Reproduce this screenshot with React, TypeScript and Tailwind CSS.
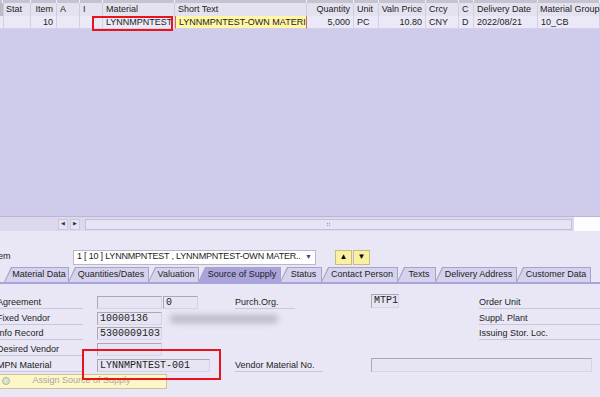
import React from "react";

const cols = "grid-cols-[3px_28px_26px_23px_23px_72px_132px_47px_25px_47px_33px_15px_64px_62px]";

const headers: { label: string; right?: boolean }[] = [
  { label: "" },
  { label: "Stat" },
  { label: "Item", right: true },
  { label: "A" },
  { label: "I" },
  { label: "Material" },
  { label: "Short Text" },
  { label: "Quantity", right: true },
  { label: "Unit" },
  { label: "Valn Price", right: true },
  { label: "Crcy" },
  { label: "C" },
  { label: "Delivery Date" },
  { label: "Material Group" },
];

const row: { v: string; right?: boolean; yellow?: boolean }[] = [
  { v: "" },
  { v: "" },
  { v: "10", right: true },
  { v: "" },
  { v: "" },
  { v: "LYNNMPNTEST" },
  { v: "LYNNMPNTEST-OWN MATERI", yellow: true },
  { v: "5,000", right: true },
  { v: "PC" },
  { v: "10.80", right: true },
  { v: "CNY" },
  { v: "D" },
  { v: "2022/08/21" },
  { v: "10_CB" },
];

const tabs = [
  { label: "Material Data", w: "w-[65px]" },
  { label: "Quantities/Dates", w: "w-[81px]" },
  { label: "Valuation", w: "w-[51px]" },
  { label: "Source of Supply", w: "w-[83px]", active: true },
  { label: "Status", w: "w-[42px]" },
  { label: "Contact Person", w: "w-[77px]" },
  { label: "Texts", w: "w-[39px]" },
  { label: "Delivery Address", w: "w-[82px]" },
  { label: "Customer Data", w: "w-[75px]" },
];

function Label({ text, w }: { text: string; w: string }) {
  return (
    <div className={`${w} h-[13px] shrink-0 border-b border-[#c9c7da] leading-[12px] whitespace-nowrap`}>
      {text}
    </div>
  );
}

function Field({ value, w }: { value?: string; w: string }) {
  return (
    <div
      className={`${w} h-[13px] shrink-0 border border-t-[#a9a7b8] border-l-[#a9a7b8] border-r-[#d6d4e4] border-b-[#d6d4e4] bg-[#e7e5f3] pl-[2px] font-['Liberation_Mono',monospace] text-[10px] leading-[11px] text-[#222]`}
    >
      {value}
    </div>
  );
}

export default function App() {
  return (
    <div className="relative flex h-[397px] w-[600px] flex-col overflow-hidden bg-[#e9e7f6] font-['Liberation_Sans',Arial,sans-serif] text-[9px] text-[#1c1c1c]">
      {/* grid: previous row strip */}
      <div className={`grid h-[3px] ${cols} bg-[#c5c3d1]`}>
        {headers.map((_, i) => (
          <div key={i} className="border-r border-[#f2f1f8]" />
        ))}
      </div>
      {/* header */}
      <div className={`grid h-[13px] ${cols} bg-[#e4e2ee]`}>
        {headers.map((h, i) => (
          <div
            key={i}
            className={`whitespace-nowrap border-r border-[#cfcddc] leading-[13px] ${
              i === 0 ? "bg-[#bdbbca]" : ""
            } ${i === 13 ? "pl-[2px]" : "overflow-hidden"} ${h.right ? "pr-[3px] text-right" : i === 13 ? "" : "pl-[3px]"}`}
          >
            {h.label}
          </div>
        ))}
      </div>
      {/* data row */}
      <div className={`grid h-[13px] ${cols} bg-[#ebe9f7]`}>
        {row.map((c, i) => (
          <div
            key={i}
            className={`overflow-hidden whitespace-nowrap border-r border-b border-[#d3d1e3] leading-[12px] ${
              c.right ? "pr-[3px] text-right" : "pl-[3px]"
            } ${c.yellow ? "border-l border-l-[#e0665a] border-r-[#e0665a] bg-[#fff6a6]" : ""}`}
          >
            {c.v}
          </div>
        ))}
      </div>
      {/* empty grid area */}
      <div className="h-[188px] border-b border-[#bab7d6] bg-[#cfcbea]" />
      {/* horizontal scrollbar */}
      <div className="flex h-[14px] items-center bg-[#dcd9ef]">
        <div className="ml-[58px] flex gap-[2px]">
          <div className="flex h-[11px] w-[10px] items-center justify-center border border-[#c9c6df] bg-[#e6e4f4] text-[5px] text-[#333]">◀</div>
          <div className="flex h-[11px] w-[10px] items-center justify-center border border-[#c9c6df] bg-[#e6e4f4] text-[5px] text-[#333]">▶</div>
        </div>
        <div className="ml-[5px] flex h-[11px] w-[487px] items-center border border-[#c3c0dc] bg-[#e6e4f4] pl-[241px]">
          <div className="grid grid-cols-2 gap-[1px]">
            <span className="h-[1px] w-[1px] bg-[#9a97b5]" />
            <span className="h-[1px] w-[1px] bg-[#9a97b5]" />
            <span className="h-[1px] w-[1px] bg-[#9a97b5]" />
            <span className="h-[1px] w-[1px] bg-[#9a97b5]" />
          </div>
        </div>
        <div className="ml-[2px] h-[14px] flex-1 bg-[#fdfdff]" />
      </div>

      {/* item selector */}
      <div className="mt-[18px] flex h-[16px] items-center">
        <div className="ml-[-7px] w-[80px]">Item</div>
        <div className="flex h-[15px] w-[243px] items-center border border-[#b9b7c9] bg-white pl-[3px]">
          <span className="flex-1 overflow-hidden whitespace-nowrap tracking-[-0.2px]">1 [ 10 ] LYNNMPNTEST , LYNNMPNTEST-OWN MATER..</span>
          <span className="ml-[3px] mr-[3px] text-[7px] text-[#4b3b8f]">▼</span>
        </div>
        <div className="ml-[19px] flex gap-[1px]">
          <div className="flex h-[15px] w-[17px] items-center justify-center border border-[#c7bd80] bg-[#fbf0a2] text-[8px] text-black">▲</div>
          <div className="flex h-[15px] w-[17px] items-center justify-center border border-[#c7bd80] bg-[#fbf0a2] text-[8px] text-black">▼</div>
        </div>
      </div>

      {/* tabs */}
      <div className="mt-[2px] ml-[4px] flex h-[15px]">
        {tabs.map((t) => (
          <div
            key={t.label}
            className={`${t.w} -mr-[1px] shrink-0 bg-[#a6a2c8] p-[1px] pb-0 [clip-path:polygon(7px_0,100%_0,100%_100%,0_100%)]`}
          >
            <div
              className={`flex h-full items-center justify-center pl-[5px] whitespace-nowrap [clip-path:polygon(7px_0,100%_0,100%_100%,0_100%)] ${
                t.active ? "bg-[#aaa4dc]" : "bg-[#d5d2ee]"
              }`}
            >
              {t.label}
            </div>
          </div>
        ))}
      </div>
      <div className="h-[2px] bg-[#aaa4dc]" />

      {/* form */}
      <div className="mt-[10px] flex flex-col gap-[2.5px]">
        <div className="flex items-end">
          <div className="ml-[-3px] flex w-[238px] items-end">
            <Label text="Agreement" w="w-[86px]" />
            <div className="ml-[14px] flex gap-[1px]">
              <Field w="w-[65px]" />
              <Field w="w-[35px]" value="0" />
            </div>
          </div>
          <Label text="Purch.Org." w="w-[60px]" />
          <div className="ml-[76px] mb-[1px]">
            <Field w="w-[28px] h-[14px]" value="MTP1" />
          </div>
          <div className="ml-[80px] flex-1">
            <Label text="Order Unit" w="w-full" />
          </div>
        </div>
        <div className="flex items-end">
          <div className="ml-[-3px] flex w-[482px] items-end">
            <Label text="Fixed Vendor" w="w-[86px]" />
            <div className="ml-[14px]">
              <Field w="w-[65px]" value="10000136" />
            </div>
            <div className="mb-[2px] ml-[8px] h-[8px] w-[108px] rounded-full bg-[#b9b7c4] blur-[3px]" />
          </div>
          <div className="flex-1">
            <Label text="Suppl. Plant" w="w-full" />
          </div>
        </div>
        <div className="flex items-end">
          <div className="ml-[-3px] flex w-[482px] items-end">
            <Label text="Info Record" w="w-[86px]" />
            <div className="ml-[14px]">
              <Field w="w-[65px]" value="5300009103" />
            </div>
          </div>
          <div className="flex-1">
            <Label text="Issuing Stor. Loc." w="w-full" />
          </div>
        </div>
        <div className="flex items-end">
          <div className="ml-[-3px] flex items-end">
            <Label text="Desired Vendor" w="w-[86px]" />
            <div className="ml-[14px]">
              <Field w="w-[65px]" />
            </div>
          </div>
        </div>
        <div className="flex items-end">
          <div className="ml-[-3px] flex w-[238px] items-end">
            <Label text="MPN Material" w="w-[86px]" />
            <div className="ml-[14px]">
              <Field w="w-[113px]" value="LYNNMPNTEST-001" />
            </div>
          </div>
          <Label text="Vendor Material No." w="w-[88px]" />
          <div className="ml-[48px]">
            <Field w="w-[221px] h-[14px]" />
          </div>
        </div>
        <div className="ml-[-2px] mt-[-1px] flex h-[15px] w-[169px] items-center border border-[#cbc496] bg-[#fcf6c8]">
          <svg className="ml-[2px] h-[10px] w-[10px]" viewBox="0 0 10 10">
            <circle cx="5" cy="5" r="3.5" fill="#d9e6c9" stroke="#a9b79a" strokeWidth="1" />
          </svg>
          <span className="flex-1 pr-[14px] text-center text-[#aaa79c]">Assign Source of Supply</span>
        </div>
      </div>

      {/* annotation boxes */}
      <div className="absolute left-[92px] top-[16px] h-[15px] w-[81px] border-2 border-[#e8141c]" />
      <div className="absolute left-[82px] top-[349px] h-[31px] w-[139px] border-2 border-[#e8141c]" />
    </div>
  );
}
